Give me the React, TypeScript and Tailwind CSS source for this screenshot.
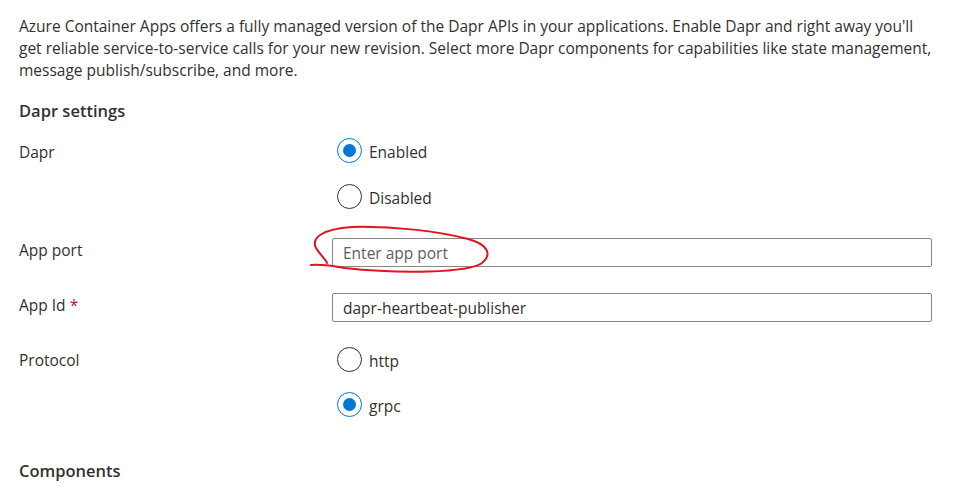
import React from "react";

function Radio({ label, checked }: { label: string; checked?: boolean }) {
  return (
    <div className="flex items-center h-[24px]">
      <span
        className={
          "flex items-center justify-center w-[25px] h-[25px] rounded-full border bg-white " +
          (checked ? "border-[#0078d4]" : "border-[#323130]")
        }
      >
        {checked && <span className="block w-[13px] h-[13px] rounded-full bg-[#0078d4]" />}
      </span>
      <span className="ml-[7px] mt-[4px] leading-[22px]">{label}</span>
    </div>
  );
}

export default function App() {
  return (
    <div
      className="relative w-[957px] h-[495px] overflow-hidden bg-white text-[#323130] text-[15.5px]"
      style={{ fontFamily: '"Segoe UI", "Open Sans", "Noto Sans", sans-serif' }}
    >
      <div className="pl-[19px] pr-[25px] pt-[15px]">
        <p className="leading-[22px] whitespace-nowrap">
          Azure Container Apps offers a fully managed version of the Dapr APIs in your applications. Enable Dapr and right away you'll
          <br />
          get reliable service-to-service calls for your new revision. Select more Dapr components for capabilities like state management,
          <br />
          message publish/subscribe, and more.
        </p>
        <h2 className="mt-[19px] leading-[22px] text-[16.5px] font-semibold">Dapr settings</h2>

        <div className="mt-[16px] flex">
          <div className="w-[318px] pt-[3px] leading-[22px]">Dapr</div>
          <div className="flex flex-col gap-[22px]">
            <Radio label="Enabled" checked />
            <Radio label="Disabled" />
          </div>
        </div>

        <div className="mt-[30px] flex">
          <div className="w-[313px] pt-[1px] leading-[22px]">App port</div>
          <div className="flex-1 h-[29px] border border-[#8a8886] rounded-[2px] flex items-center pl-[10px] pt-[2px] text-[#605e5c]">
            Enter app port
          </div>
        </div>

        <div className="mt-[26px] flex">
          <div className="w-[313px] pt-[1px] leading-[22px]">
            App Id <span className="text-[#a4262c]">*</span>
          </div>
          <div className="flex-1 h-[29px] border border-[#8a8886] rounded-[2px] flex items-center pl-[10px] pt-[2px]">
            dapr-heartbeat-publisher
          </div>
        </div>

        <div className="mt-[25px] flex">
          <div className="w-[318px] pt-[2px] leading-[22px]">Protocol</div>
          <div className="flex flex-col gap-[21px]">
            <Radio label="http" />
            <Radio label="grpc" checked />
          </div>
        </div>

        <h2 className="mt-[44px] leading-[22px] text-[16.5px] font-semibold">Components</h2>
      </div>

      <svg
        className="absolute left-0 top-0 pointer-events-none"
        width="957"
        height="495"
        viewBox="0 0 957 495"
        fill="none"
      >
        <path
          d="M311,265 C322,264 332,266 345,268 C400,274 468,273 482,263 C493,254 487,244 468,239 C438,231 392,226 352,227 C322,229 311,238 316,248 C320,255 325,258 327,263"
          stroke="#e0141e"
          strokeWidth="2"
          strokeLinecap="round"
        />
      </svg>
    </div>
  );
}
